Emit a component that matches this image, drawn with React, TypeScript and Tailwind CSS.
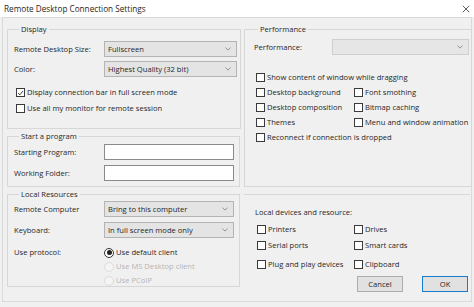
import React from 'react';

const Check: React.FC<{ checked?: boolean }> = ({ checked }) => (
  <span className="w-[9px] h-[9px] border border-[#3a3a3a] bg-white flex items-center justify-center shrink-0">
    {checked && (
      <svg viewBox="0 0 10 10" className="w-[8px] h-[8px]" fill="none" stroke="#222" strokeWidth={1.3}>
        <path d="M1.5 5.2 L4 7.6 L8.6 2.2" />
      </svg>
    )}
  </span>
);

const CheckRow: React.FC<{ label: string; checked?: boolean; className?: string }> = ({ label, checked, className = '' }) => (
  <div className={`flex items-center gap-[2px] h-[11px] whitespace-nowrap ${className}`}>
    <Check checked={checked} />
    <span>{label}</span>
  </div>
);

const Radio: React.FC<{ label: string; selected?: boolean; disabled?: boolean }> = ({ label, selected, disabled }) => (
  <div className={`flex items-center gap-[2px] h-[11px] whitespace-nowrap ${disabled ? 'text-[#b5b5b5]' : ''}`}>
    <span
      className={`w-[10px] h-[10px] rounded-full border flex items-center justify-center shrink-0 ${
        disabled ? 'border-[#dcdcdc] bg-[#f4f4f4]' : 'border-[#333] bg-white'
      }`}
    >
      {selected && <span className="w-[5px] h-[5px] rounded-full bg-[#222]" />}
    </span>
    <span>{label}</span>
  </div>
);

const Select: React.FC<{ value?: string; className?: string; disabled?: boolean }> = ({ value, className = '', disabled }) => (
  <div
    className={`h-[16px] flex items-center justify-between pl-[3px] pr-[5px] border whitespace-nowrap ${
      disabled ? 'bg-[#e6e6e6] border-[#cfcfcf]' : 'bg-[#e4e4e4] border-[#b4b4b4]'
    } ${className}`}
  >
    <span>{value}</span>
    <svg viewBox="0 0 8 5" className="w-[6px] h-[4px]" fill="none" stroke="#777" strokeWidth={1}>
      <path d="M0.5 0.5 L4 4 L7.5 0.5" />
    </svg>
  </div>
);

const Field: React.FC<{ label: string; children: React.ReactNode; className?: string }> = ({ label, children, className = '' }) => (
  <div className={`flex items-center ${className}`}>
    <span className="w-[90px] shrink-0 whitespace-nowrap">{label}</span>
    {children}
  </div>
);

const Group: React.FC<{ title: string; className?: string; children: React.ReactNode }> = ({ title, className = '', children }) => (
  <fieldset className={`border border-[#d7d7d7] ${className}`}>
    <legend className="ml-[5px] px-[2px] leading-[11px]">{title}</legend>
    {children}
  </fieldset>
);

export default function App() {
  return (
    <div
      className="w-[474px] h-[307px] bg-[#f0f0f0] text-[#262626] text-[7.6px] leading-[11px] flex flex-col overflow-hidden"
      style={{ fontFamily: '"Open Sans", "Noto Sans", sans-serif' }}
    >
      <div className="h-[17px] bg-white flex items-center justify-between pl-[4px] pr-[4px] shrink-0">
        <span className="text-[8.2px]">Remote Desktop Connection Settings</span>
        <svg viewBox="0 0 10 10" className="w-[8px] h-[8px]" fill="none" stroke="#333" strokeWidth={1}>
          <path d="M1 1 L9 9 M9 1 L1 9" />
        </svg>
      </div>

      <div className="mx-[2px] h-[285px] border border-[#dadada] pl-[4px] pt-[6px] flex flex-col">
        <div className="flex gap-[4px]">
          <div className="w-[233px] flex flex-col gap-[2px]">
            <Group title="Display" className="h-[105px] pl-[6px] pr-[3px]">
              <Field label="Remote Desktop Size:" className="mt-[6px]">
                <Select value="Fullscreen" className="w-[133px]" />
              </Field>
              <Field label="Color:" className="mt-[4px]">
                <Select value="Highest Quality (32 bit)" className="w-[133px]" />
              </Field>
              <CheckRow label="Display connection bar in full screen mode" checked className="mt-[10px] ml-[2px]" />
              <CheckRow label="Use all my monitor for remote session" className="mt-[5px] ml-[2px]" />
            </Group>
            <Group title="Start a program" className="h-[56px] pl-[6px]">
              <Field label="Starting Program:" className="mt-[2px]">
                <div className="w-[130px] h-[16px] bg-white border border-[#8a8a8a]" />
              </Field>
              <Field label="Working Folder:" className="mt-[5px]">
                <div className="w-[130px] h-[16px] bg-white border border-[#8a8a8a]" />
              </Field>
            </Group>
          </div>

          <Group title="Performance" className="w-[226px] h-[163px] pl-[8px] pr-[2px]">
            <div className="flex items-center mt-[4px]">
              <span className="w-[79px] shrink-0 pl-[1px]">Performance:</span>
              <Select className="w-[137px]" disabled />
            </div>
            <div className="ml-[3px] mt-[17px] flex flex-col gap-[4px]">
              <CheckRow label="Show content of window while dragging" />
              <div className="grid grid-cols-[98px_1fr] gap-y-[4px]">
                <CheckRow label="Desktop background" />
                <CheckRow label="Font smothing" />
                <CheckRow label="Desktop composition" />
                <CheckRow label="Bitmap caching" />
                <CheckRow label="Themes" />
                <CheckRow label="Menu and window animation" />
              </div>
              <CheckRow label="Reconnect if connection is dropped" />
            </div>
          </Group>
        </div>

        <div className="flex gap-[4px] mt-[2px]">
          <Group title="Local Resources" className="w-[233px] h-[98px] pl-[6px] pr-[3px]">
            <Field label="Remote Computer" className="mt-[1px]">
              <Select value="Bring to this computer" className="w-[130px]" />
            </Field>
            <Field label="Keyboard:" className="mt-[5px]">
              <Select value="In full screen mode only" className="w-[130px]" />
            </Field>
            <div className="flex mt-[9px]">
              <span className="w-[90px] shrink-0">Use protocol:</span>
              <div className="flex flex-col gap-[3px]">
                <Radio label="Use default client" selected />
                <Radio label="Use MS Desktop client" disabled />
                <Radio label="Use PCoIP" disabled />
              </div>
            </div>
          </Group>

          <div className="w-[226px] mt-[5px] border-t border-[#d7d7d7] flex flex-col">
            <div className="pl-[11px] mt-[12px]">Local devices and resource:</div>
            <div className="ml-[13px] mt-[6px] grid grid-cols-[97px_1fr] gap-y-[5px]">
              <CheckRow label="Printers" />
              <CheckRow label="Drives" />
              <CheckRow label="Serial ports" />
              <CheckRow label="Smart cards" />
              <CheckRow label="Plug and play devices" className="mt-[3px]" />
              <CheckRow label="Clipboard" className="mt-[3px]" />
            </div>
            <div className="flex justify-end gap-[19px] mt-[6px] pr-[2px]">
              <button className="w-[46px] h-[16px] bg-[#e1e1e1] border border-[#adadad] text-[7.6px]">Cancel</button>
              <button className="w-[46px] h-[16px] bg-[#e1e1e1] border border-[#1979ca] text-[7.6px]">OK</button>
            </div>
          </div>
        </div>
      </div>
    </div>
  );
}
